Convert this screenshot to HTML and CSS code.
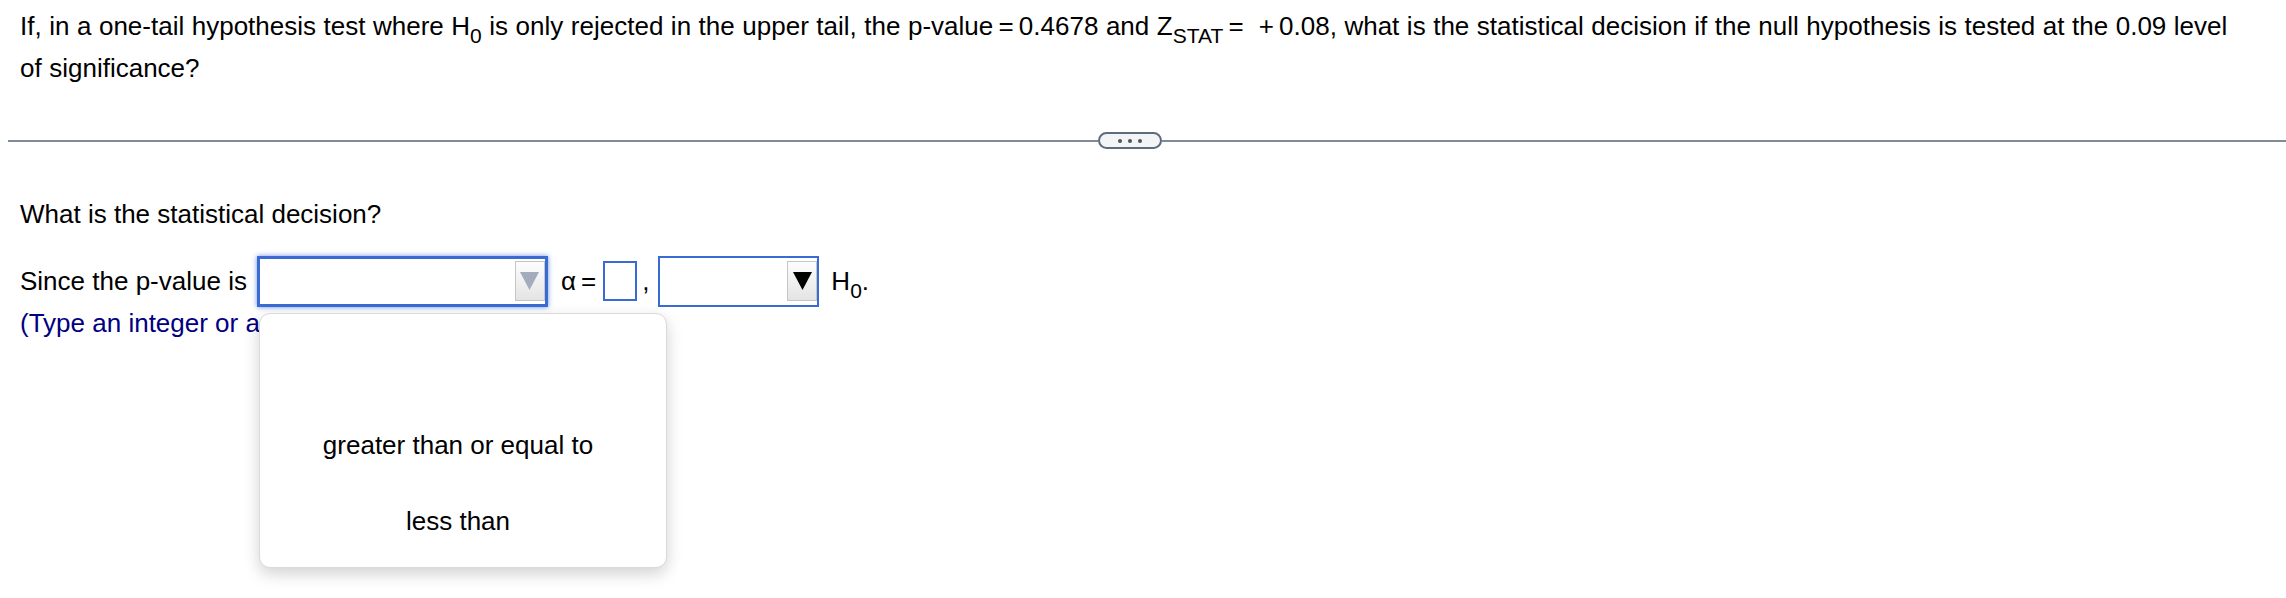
FILE: index.html
```html
<!DOCTYPE html>
<html lang="en">
<head>
<meta charset="utf-8">
<title>Statistical decision</title>
<link rel="stylesheet" href="styles.css">
</head>
<body>
<div class="page">
<div class="question">If, in a one-tail hypothesis test where H<sub class="sub">0</sub> is only rejected in the upper tail, the p-value&thinsp;=&thinsp;0.4678 and Z<sub class="sub">STAT</sub>&thinsp;= &nbsp;+&thinsp;0.08, what is the statistical decision if the null hypothesis is tested at the 0.09 level of significance?</div>

<div class="divider">
  <div class="divider-line left"></div>
  <div class="pill"><span class="dot"></span><span class="dot"></span><span class="dot"></span></div>
  <div class="divider-line right"></div>
</div>

<div class="prompt">What is the statistical decision?</div>

<div class="answer-row">
  <span class="label">Since the p-value is</span>
  <div class="select select-focus">
    <div class="arrow-btn">
      <svg width="19" height="18" viewBox="0 0 19 18"><polygon points="0,0 19,0 9.5,18" fill="#a3abbc"/></svg>
    </div>
  </div>
  <span class="alpha">α</span><span class="equals">=</span>
  <div class="small-input"></div>
  <span class="comma">,</span>
  <div class="select select-plain">
    <div class="arrow-btn">
      <svg width="19" height="18" viewBox="0 0 19 18"><polygon points="0,0 19,0 9.5,18" fill="#000"/></svg>
    </div>
  </div>
  <span class="hyp">H<sub class="sub small">0</sub>.</span>

  <div class="popup">
    <div class="option"></div>
    <div class="option">greater than or equal to</div>
    <div class="option">less than</div>
  </div>
</div>

<div class="hint">(Type an integer or a decimal.)</div>
</div>
</body>
</html>
```

FILE: styles.css
```css
* {
  box-sizing: border-box;
}

html,
body {
  margin: 0;
  background: #fff;
}

body {
  font-family: "Liberation Sans", Arial, sans-serif;
  font-size: 26px;
  color: #000;
}

.page {
  min-height: 598px;
}

.question {
  padding: 5px 50px 0 20px;
  line-height: 42px;
  word-spacing: 0.3px;
}

.sub {
  font-size: 21px;
  vertical-align: -8px;
  line-height: 0;
}

.divider {
  display: flex;
  align-items: center;
  height: 17px;
  margin: 43px 0 0 8px;
}

.divider-line {
  height: 2px;
  background: #7f8b98;
}

.divider-line.left {
  width: 1090px;
}

.divider-line.right {
  flex: 1;
}

.pill {
  width: 64px;
  height: 17px;
  border: 2px solid #5d6b7d;
  border-radius: 9px;
  background: #f3f4f6;
  display: flex;
  align-items: center;
  justify-content: center;
  gap: 6px;
}

.dot {
  width: 4px;
  height: 4px;
  border-radius: 50%;
  background: #4b5563;
}

.prompt {
  margin-top: 44px;
  padding-left: 20px;
  line-height: 42px;
}

.answer-row {
  position: relative;
  display: flex;
  align-items: center;
  height: 42px;
  margin-top: 25px;
  padding-left: 20px;
  line-height: 42px;
}

.label {
  white-space: nowrap;
}

.select {
  flex: none;
  height: 51px;
  background: #fff;
  display: flex;
  align-items: center;
  justify-content: flex-end;
}

.select-focus {
  width: 291px;
  margin-left: 10px;
  border: 3px solid #3a6bd4;
  box-shadow: 0 0 5px rgba(58, 107, 212, 0.75);
}

.select-plain {
  width: 161px;
  margin-left: 9px;
  border: 2px solid #3a6bd4;
}

.arrow-btn {
  width: 30px;
  height: 40px;
  border: 1px solid #c6c6c6;
  background: linear-gradient(#fdfdfd, #e4e4e4);
  display: flex;
  align-items: center;
  justify-content: center;
}

.alpha {
  margin-left: 13px;
}

.equals {
  margin-left: 5px;
}

.small-input {
  flex: none;
  width: 34px;
  height: 40px;
  margin-left: 7px;
  border: 2px solid #3a6bd4;
  background: #fff;
}

.comma {
  margin-left: 5px;
}

.hyp {
  margin-left: 12px;
}

.popup {
  position: absolute;
  left: 259px;
  top: 53px;
  z-index: 2;
  width: 408px;
  height: 255px;
  padding: 17px 10px 10px 0;
  background: #fff;
  border: 1px solid #dadada;
  border-radius: 11px;
  box-shadow: 0 6px 16px rgba(0, 0, 0, 0.18);
}

.option {
  height: 76px;
  line-height: 76px;
  text-align: center;
  white-space: nowrap;
}

.hint {
  padding-left: 20px;
  line-height: 42px;
  color: #000080;
}
```
